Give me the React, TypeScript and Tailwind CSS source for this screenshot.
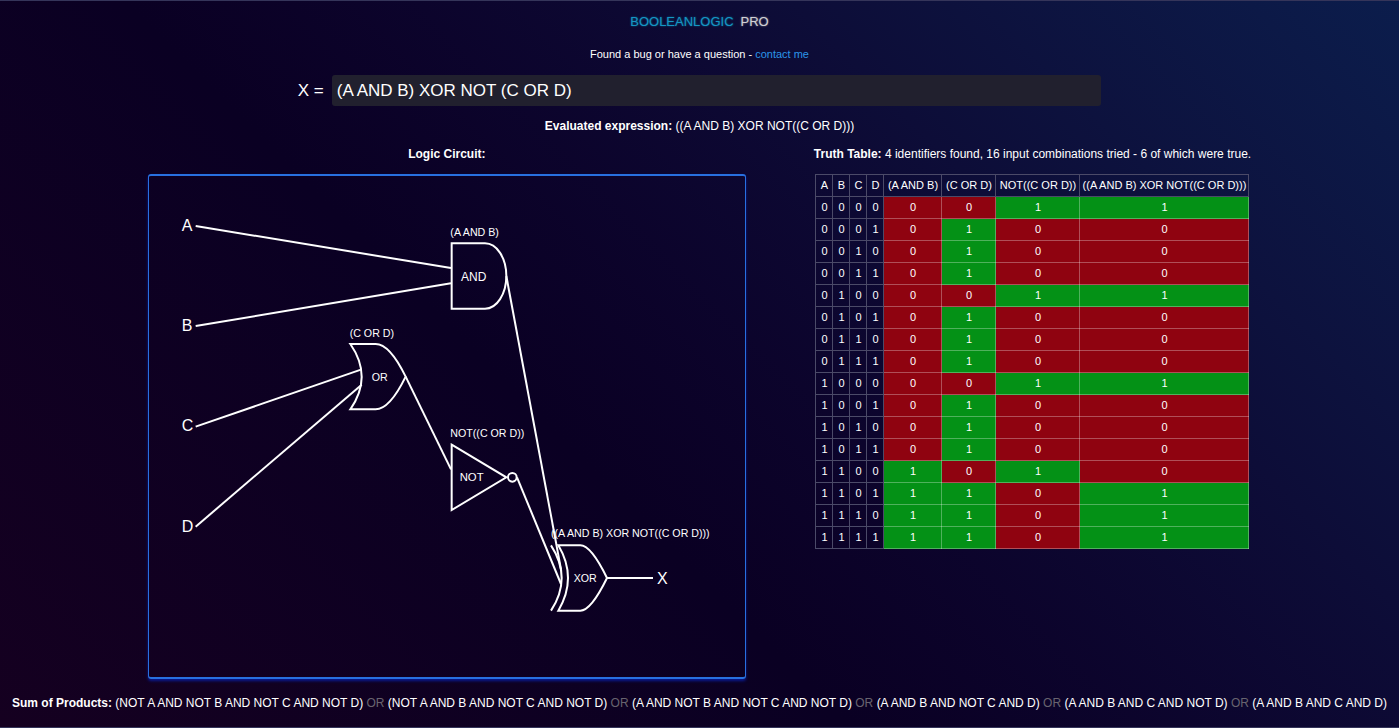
const EXPRESSION = "((A AND B) XOR NOT((C OR D)))";

const inputs = ["A", "B", "C", "D"];

const columns = [
  { label: "(A AND B)", width: "w-[58px]" },
  { label: "(C OR D)", width: "w-[54px]" },
  { label: "NOT((C OR D))", width: "w-[84px]" },
  { label: EXPRESSION, width: "w-[169px]" },
];

const rows = Array.from({ length: 16 }, (_, i) => {
  const [a, b, c, d] = [(i >> 3) & 1, (i >> 2) & 1, (i >> 1) & 1, i & 1];
  const and = a & b;
  const or = c | d;
  const not = 1 - or;
  return { bits: [a, b, c, d], results: [and, or, not, and ^ not] };
});

const products = rows
  .filter((row) => row.results[3] === 1)
  .map(
    (row) =>
      `(${row.bits.map((bit, i) => (bit ? inputs[i] : `NOT ${inputs[i]}`)).join(" AND ")})`
  );

function Circuit() {
  return (
    <svg
      viewBox="0 0 894 752"
      className="block w-full"
      role="img"
      aria-label="Logic circuit"
    >
      <g fill="none" stroke="#fff" strokeWidth="3">
        {/* Wires */}
        <path d="M70 75 L453 138" />
        <path d="M70 225 L453 161" />
        <path d="M70 376 L319 290" />
        <path d="M70 526 L319 313" />
        <path d="M385 301 L453 440" />
        <path d="M536 150 L618 590" />
        <path d="M552 452 L618 612" />
        <path d="M687 603 L756 603" />

        {/* AND */}
        <path d="M454 101 H504 A32 49 0 0 1 504 199 H454 Z" />
        {/* OR */}
        <path d="M302 252 H340 Q361 252 385 301 Q361 350 340 350 H302 Q336 301 302 252 Z" />
        {/* NOT */}
        <path d="M454 403 L536 452 L454 501 Z" />
        <circle cx="545" cy="452" r="6.5" />
        {/* XOR */}
        <path d="M614 554 H647 Q663 554 687 603 Q663 652 647 652 H614 Q643 603 614 554 Z" />
        <path d="M603 554 Q635 603 603 652" />
      </g>

      <g fill="#fff" fontSize="24">
        <text x="49" y="82">A</text>
        <text x="49" y="233">B</text>
        <text x="49" y="383">C</text>
        <text x="49" y="534">D</text>
        <text x="762" y="612">X</text>
      </g>

      <g fill="#fff" fontSize="16">
        <text x="452" y="90">(A AND B)</text>
        <text x="301" y="241">(C OR D)</text>
        <text x="452" y="391">NOT((C OR D))</text>
        <text x="603" y="542">{EXPRESSION}</text>
        <text x="468" y="157" fontSize="18">AND</text>
        <text x="334" y="307">OR</text>
        <text x="466" y="458" fontSize="17">NOT</text>
        <text x="637" y="609">XOR</text>
      </g>
    </svg>
  );
}

function TruthTable() {
  return (
    <table className="border-collapse text-center text-[11px] leading-[21px]">
      <thead>
        <tr>
          {inputs.map((name) => (
            <th
              key={name}
              scope="col"
              className="w-[17px] border border-[#4b4a68] p-0 font-normal"
            >
              {name}
            </th>
          ))}
          {columns.map((col) => (
            <th
              key={col.label}
              scope="col"
              className={`${col.width} whitespace-nowrap border border-[#4b4a68] p-0 font-normal`}
            >
              {col.label}
            </th>
          ))}
        </tr>
      </thead>
      <tbody>
        {rows.map((row) => (
          <tr key={row.bits.join("")}>
            {row.bits.map((bit, i) => (
              <td key={i} className="border border-[#4b4a68] p-0">
                {bit}
              </td>
            ))}
            {row.results.map((value, i) => (
              <td
                key={i}
                className={`border border-white/30 p-0 ${
                  value ? "bg-[#049116]" : "bg-[#8f0310]"
                }`}
              >
                {value}
              </td>
            ))}
          </tr>
        ))}
      </tbody>
    </table>
  );
}

export default function App() {
  return (
    <div className="flex min-h-screen flex-col items-center border-y border-[#35355a] bg-linear-45 from-[#150020] via-[#0a0023] via-40% to-[#0b1d4c] font-['Liberation_Sans',Arial,sans-serif] text-[12px] leading-4 text-white">
      <h1 className="mt-[11px] flex gap-[7px] text-[13px] leading-5 text-[#d0d0d4] [text-shadow:0_0_2px_#8a8a94]">
        <span className="text-[#1596c4] [text-shadow:0_0_2px_#0c6c94]">
          BOOLEANLOGIC
        </span>
        <span>PRO</span>
      </h1>

      <p className="mt-[14px] text-[11px]">
        Found a bug or have a question -{" "}
        <a href="#contact" className="text-[#2b95e8]">
          contact me
        </a>
      </p>

      <div className="mt-[13px] flex w-full items-center justify-center gap-2 text-[17px]">
        <label htmlFor="expression">X =</label>
        <input
          id="expression"
          type="text"
          defaultValue="(A AND B) XOR NOT (C OR D)"
          className="h-[31px] w-[55%] rounded-[3px] bg-[#21202e] px-[5px] outline-none"
        />
      </div>

      <p className="mt-3">
        <b>Evaluated expression:</b> {EXPRESSION}
      </p>

      <main className="mt-3 flex w-full justify-center gap-[68px]">
        <section className="flex w-[43%] max-w-[598px] flex-col items-center">
          <h2 className="font-bold">Logic Circuit:</h2>
          <div className="mt-3 w-full rounded-[3px] border-x border-y-2 border-[#2870e0] shadow-[0_2px_3px_#0a1a90]">
            <Circuit />
          </div>
        </section>

        <section className="flex flex-col items-center">
          <h2 className="mb-3">
            <b>Truth Table:</b> 4 identifiers found, 16 input combinations tried
            - 6 of which were true.
          </h2>
          <TruthTable />
        </section>
      </main>

      <p className="mt-4">
        <b>Sum of Products:</b>{" "}
        {products.map((product, i) => (
          <span key={product}>
            {i > 0 && <span className="text-[#68646f]"> OR </span>}
            {product}
          </span>
        ))}
      </p>
    </div>
  );
}
